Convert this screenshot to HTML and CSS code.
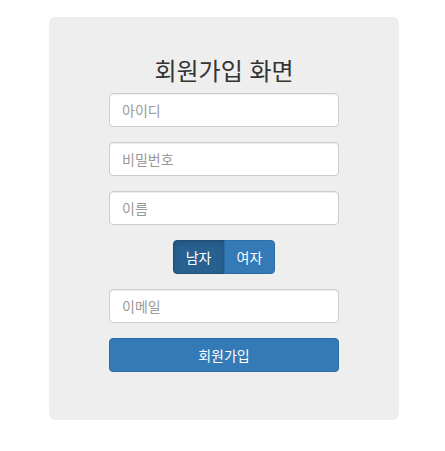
FILE: index.html
```html
<!DOCTYPE html>
<html lang="ko">
<head>
  <meta charset="UTF-8" />
  <meta name="viewport" content="width=device-width, initial-scale=1.0"/>
  <title>회원가입</title>
  <link rel="stylesheet" href="styles.css">
</head>
<body>
  <div class="signup">
    <h3 class="title">회원가입 화면</h3>
    <form class="form">
      <div class="form-group">
        <input class="form-control" type="text" placeholder="아이디">
      </div>
      <div class="form-group">
        <input class="form-control" type="password" placeholder="비밀번호">
      </div>
      <div class="form-group">
        <input class="form-control" type="text" placeholder="이름">
      </div>
      <div class="form-group gender">
        <div class="btn-group">
          <label class="btn btn-primary active">남자</label>
          <label class="btn btn-primary">여자</label>
        </div>
      </div>
      <div class="form-group">
        <input class="form-control" type="email" placeholder="이메일">
      </div>
      <button type="button" class="btn btn-primary btn-block">회원가입</button>
    </form>
  </div>
</body>
</html>
```

FILE: styles.css
```css
* {
  box-sizing: border-box;
}
body {
  margin: 0;
  background: #fff;
  font-family: "Noto Sans CJK KR", "Noto Sans", sans-serif;
  font-size: 14px;
  color: #333;
}
.signup {
  width: 350px;
  margin: 17px 0 0 49px;
  padding: 20px 60px 48px;
  background: #eee;
  border-radius: 6px;
}
.title {
  margin: 20px 0 10px;
  font-size: 24px;
  font-weight: 400;
  line-height: 1.1;
  text-align: center;
}
.form-group {
  margin-bottom: 15px;
}
.form-control {
  display: block;
  width: 100%;
  height: 34px;
  padding: 6px 12px;
  font-family: inherit;
  font-size: 14px;
  color: #555;
  background: #fff;
  border: 1px solid #ccc;
  border-radius: 4px;
  box-shadow: inset 0 1px 1px rgba(0,0,0,0.075);
}
.form-control::placeholder {
  color: #999;
}
.gender {
  display: flex;
  justify-content: center;
}
.btn-group {
  display: flex;
}
.btn {
  display: inline-block;
  height: 34px;
  padding: 6px 12px;
  font-family: inherit;
  font-size: 14px;
  line-height: 20px;
  text-align: center;
  border: 1px solid transparent;
  border-radius: 4px;
  cursor: pointer;
}
.btn-primary {
  color: #fff;
  background: #337ab7;
  border-color: #2e6da4;
}
.btn-primary.active {
  background: #286090;
  border-color: #204d74;
  box-shadow: inset 0 3px 5px rgba(0,0,0,0.125);
}
.btn-group .btn:first-child {
  border-top-right-radius: 0;
  border-bottom-right-radius: 0;
}
.btn-group .btn:last-child {
  margin-left: -1px;
  border-top-left-radius: 0;
  border-bottom-left-radius: 0;
}
.btn-block {
  display: block;
  width: 100%;
}
```
